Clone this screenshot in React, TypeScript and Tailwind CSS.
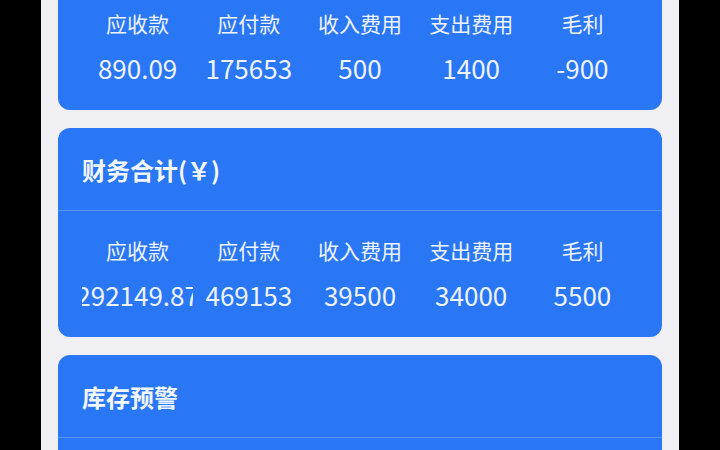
import React from "react";

type Item = { label: string; value: string };

const font = { fontFamily: '"Noto Sans CJK SC", "Noto Sans", sans-serif' };

function Stats({ items }: { items: Item[] }) {
  return (
    <div className="grid grid-cols-5 px-6 pt-[25px] pb-[26px]">
      {items.map((it) => (
        <div key={it.label} className="flex flex-col items-center overflow-hidden">
          <div className="text-[21px] leading-[28px] text-[#eef3ff] whitespace-nowrap">{it.label}</div>
          <div className="mt-[15px] w-full flex justify-center overflow-hidden">
            <span className="text-[26px] leading-[32px] text-[#eef3ff] whitespace-nowrap">{it.value}</span>
          </div>
        </div>
      ))}
    </div>
  );
}

function Card({ title, items }: { title: string; items?: Item[] }) {
  return (
    <div className="rounded-[12px] bg-[#2a77f5] overflow-hidden">
      <div className="h-[82px] px-6 pt-[27px]">
        <div className="text-[24px] leading-[30px] font-bold text-[#f2f6ff] whitespace-nowrap">{title}</div>
      </div>
      <div className="h-px bg-[#5592f7]" />
      {items ? <Stats items={items} /> : <div className="h-[60px]" />}
    </div>
  );
}

export default function App() {
  const labels = ["应收款", "应付款", "收入费用", "支出费用", "毛利"];
  const today = ["890.09", "175653", "500", "1400", "-900"];
  const total = ["292149.87", "469153", "39500", "34000", "5500"];
  return (
    <div className="w-[720px] h-[450px] bg-black overflow-hidden" style={font}>
      <div className="w-[638px] h-full mx-auto bg-[#efeff4] px-[17px] overflow-hidden">
        <div className="flex flex-col gap-[18px] -mt-[99px]">
          <Card title="本月财务(￥)" items={labels.map((l, i) => ({ label: l, value: today[i] }))} />
          <Card title="财务合计(￥)" items={labels.map((l, i) => ({ label: l, value: total[i] }))} />
          <Card title="库存预警" />
        </div>
      </div>
    </div>
  );
}
